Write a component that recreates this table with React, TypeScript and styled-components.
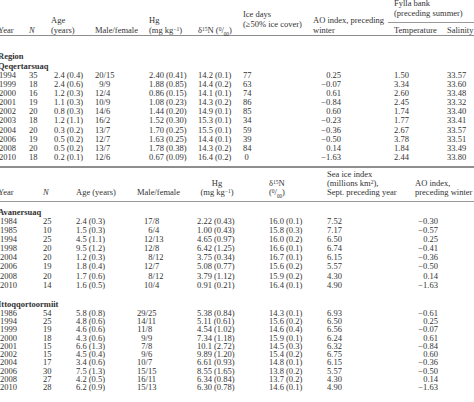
import React from "react";
import styled, { createGlobalStyle } from "styled-components";

const Global = createGlobalStyle`
  html, body { margin: 0; padding: 0; background: #ffffff; overflow: hidden; }
  body { width: 474px; height: 402px; }
`;

const TOP_COLS = "31px 22px 44px 54px 49px 45px 70px 81px 53px 40px";
const BOT_COLS = "45px 33px 61px 60px 72px 58px 86px 63px";

const Page = styled.div`
  width: 476px;
  margin-left: -2px;
  font-family: "Liberation Serif", "Times New Roman", serif;
  font-size: 8.5px;
  color: #333333;
  white-space: nowrap;
`;

const TopHead = styled.div`
  display: grid;
  grid-template-columns: ${TOP_COLS};
  grid-template-rows: auto auto;
  margin-top: -2px;
  line-height: 10px;
  border-bottom: 1.5px solid #8e8e8e;
`;

const HCell = styled.div<{ $col: number; $pb?: number; $center?: boolean }>`
  grid-column: ${(p) => p.$col};
  grid-row: 1 / span 2;
  align-self: end;
  padding-bottom: ${(p) => p.$pb ?? 0}px;
  text-align: ${(p) => (p.$center ? "center" : "left")};
`;

const Group = styled.div`
  grid-column: 9 / span 2;
  grid-row: 1;
  margin-left: -6px;
  padding-left: 6px;
  padding-bottom: 3.5px;
  border-bottom: 1px solid #9a9a9a;
`;

const SubHead = styled.div<{ $col: number }>`
  grid-column: ${(p) => p.$col};
  grid-row: 2;
  padding-top: 2.5px;
`;

const Line = styled.div``;

const Region = styled.div<{ $mt?: number; $lh?: number }>`
  font-weight: bold;
  line-height: ${(p) => p.$lh ?? 9}px;
  margin-top: ${(p) => p.$mt ?? 0}px;
`;

const Row = styled.div<{ $cols: string; $lh: number }>`
  display: grid;
  grid-template-columns: ${(p) => p.$cols};
  line-height: ${(p) => p.$lh}px;
`;

const Cell = styled.div<{ $pl?: number; $pr?: number; $align?: string }>`
  padding-left: ${(p) => p.$pl ?? 0}px;
  padding-right: ${(p) => p.$pr ?? 0}px;
  text-align: ${(p) => p.$align ?? "left"};
`;

const Num = styled.span<{ $w: number }>`
  display: inline-block;
  width: ${(p) => p.$w}px;
  text-align: right;
`;

const IceBox = styled.span`
  display: inline-block;
  width: 7px;
  text-align: center;
`;

const Rule = styled.div<{ $w: number; $mt: number }>`
  height: ${(p) => p.$w}px;
  background: #8e8e8e;
  margin-top: ${(p) => p.$mt}px;
`;

const BotHead = styled.div`
  display: grid;
  grid-template-columns: ${BOT_COLS};
  line-height: 9px;
  padding-top: 1.5px;
  padding-bottom: 4px;
  border-bottom: 1px solid #9a9a9a;
`;

const BCell = styled.div<{ $center?: boolean; $w?: number; $pl?: number }>`
  align-self: end;
  text-align: ${(p) => (p.$center ? "center" : "left")};
  width: ${(p) => (p.$w ? `${p.$w}px` : "auto")};
  padding-left: ${(p) => p.$pl ?? 0}px;
`;

const Sup = styled.sup`
  font-size: 0.65em;
  line-height: 0;
  vertical-align: 0.45em;
`;

const Block = styled.div<{ $pt: number }>`
  padding-top: ${(p) => p.$pt}px;
`;

type TopRow = [string, string, string, string, string, string, string, string, string, string];

const topRows: TopRow[] = [
  ["1994", "35", "2.4 (0.4)", "20/15", "2.40 (0.41)", "14.2 (0.1)", "77", "0.25", "1.50", "33.57"],
  ["1999", "18", "2.4 (0.6)", "9/9", "1.88 (0.85)", "14.4 (0.2)", "63", "\u22120.07", "3.34", "33.60"],
  ["2000", "16", "1.2 (0.3)", "12/4", "0.86 (0.15)", "14.1 (0.1)", "74", "0.61", "2.60", "33.48"],
  ["2001", "19", "1.1 (0.3)", "10/9", "1.08 (0.23)", "14.3 (0.2)", "86", "\u22120.84", "2.45", "33.32"],
  ["2002", "20", "0.8 (0.3)", "14/6", "1.44 (0.20)", "14.9 (0.1)", "85", "0.60", "1.74", "33.40"],
  ["2003", "18", "1.2 (1.1)", "16/2", "1.52 (0.30)", "15.3 (0.1)", "34", "\u22120.23", "1.77", "33.41"],
  ["2004", "20", "0.3 (0.2)", "13/7", "1.70 (0.25)", "15.5 (0.1)", "59", "\u22120.36", "2.67", "33.57"],
  ["2006", "19", "0.5 (0.2)", "12/7", "1.63 (0.25)", "14.4 (0.1)", "39", "\u22120.50", "3.78", "33.51"],
  ["2008", "20", "0.5 (0.2)", "13/7", "1.78 (0.38)", "14.3 (0.2)", "84", "0.14", "1.84", "33.49"],
  ["2010", "18", "0.2 (0.1)", "12/6", "0.67 (0.09)", "16.4 (0.2)", "0", "\u22121.63", "2.44", "33.80"],
];

type BotRow = [string, string, string, string, string, string, string, string];

const avanersuaq: BotRow[] = [
  ["1984", "25", "2.4 (0.3)", "17/8", "2.22 (0.43)", "16.0 (0.1)", "7.52", "\u22120.30"],
  ["1985", "10", "1.5 (0.3)", "6/4", "1.00 (0.43)", "15.8 (0.3)", "7.17", "\u22120.57"],
  ["1994", "25", "4.5 (1.1)", "12/13", "4.65 (0.97)", "16.0 (0.2)", "6.50", "0.25"],
  ["1998", "20", "9.5 (1.2)", "12/8", "6.42 (1.25)", "16.6 (0.1)", "6.74", "\u22120.41"],
  ["2004", "20", "1.2 (0.3)", "8/12", "3.75 (0.34)", "16.7 (0.1)", "6.15", "\u22120.36"],
  ["2006", "19", "1.8 (0.4)", "12/7", "5.08 (0.77)", "15.6 (0.2)", "5.57", "\u22120.50"],
  ["2008", "20", "1.7 (0.6)", "8/12", "3.79 (1.12)", "15.9 (0.2)", "4.30", "0.14"],
  ["2010", "14", "1.6 (0.5)", "10/4", "0.91 (0.21)", "16.4 (0.1)", "4.90", "\u22121.63"],
];

const ittoqq: BotRow[] = [
  ["1986", "54", "5.8 (0.8)", "29/25", "5.38 (0.84)", "14.3 (0.1)", "6.93", "\u22120.61"],
  ["1994", "25", "4.8 (0.6)", "14/11", "5.11 (0.61)", "15.6 (0.2)", "6.50", "0.25"],
  ["1999", "19", "4.6 (0.6)", "11/8", "4.54 (1.02)", "14.6 (0.4)", "6.56", "\u22120.07"],
  ["2000", "18", "4.3 (0.6)", "9/9", "7.34 (1.18)", "15.9 (0.1)", "6.24", "0.61"],
  ["2001", "15", "6.6 (1.3)", "7/8", "10.1 (2.72)", "14.5 (0.3)", "6.32", "\u22120.84"],
  ["2002", "15", "4.5 (0.4)", "9/6", "9.89 (1.20)", "15.4 (0.2)", "6.75", "0.60"],
  ["2004", "17", "3.4 (0.6)", "10/7", "6.61 (0.93)", "14.8 (0.1)", "6.15", "\u22120.36"],
  ["2006", "30", "7.5 (1.3)", "15/15", "8.55 (1.65)", "13.8 (0.2)", "5.57", "\u22120.50"],
  ["2008", "27", "4.2 (0.5)", "16/11", "6.34 (0.84)", "13.7 (0.2)", "4.30", "0.14"],
  ["2010", "28", "6.2 (0.9)", "15/13", "6.30 (0.78)", "14.6 (0.1)", "4.90", "\u22121.63"],
];

const Ratio: React.FC<{ v: string; w: number }> = ({ v, w }) => {
  const [a, b] = v.split("/");
  return (
    <>
      <Num $w={w}>{a}</Num>/{b}
    </>
  );
};

const Delta = () => (
  <>
    δ<Sup>15</Sup>N
  </>
);

const Permil = () => (
  <>
    (<Sup>0</Sup>/<sub style={{ fontSize: "0.6em", lineHeight: 0 }}>00</sub>)
  </>
);

interface SectionProps {
  name: string;
  rows: BotRow[];
  lh: number;
  mt: number;
  mfIndent: number;
  seaShift: number;
}

const Section: React.FC<SectionProps> = ({ name, rows, lh, mt, mfIndent, seaShift }) => (
  <>
    <Region $mt={mt}>{name}</Region>
    {rows.map((r, i) => (
      <Row key={i} $cols={BOT_COLS} $lh={lh}>
        <Cell $pl={2}>{r[0]}</Cell>
        <Cell>{r[1]}</Cell>
        <Cell>{r[2]}</Cell>
        <Cell $pl={mfIndent}>
          <Ratio v={r[3]} w={8.5} />
        </Cell>
        <Cell>{r[4]}</Cell>
        <Cell>{r[5]}</Cell>
        <Cell $pl={seaShift}>{r[6]}</Cell>
        <Cell $align="right" $pr={38}>
          {r[7]}
        </Cell>
      </Row>
    ))}
  </>
);

export default function App() {
  return (
    <>
      <Global />
      <Page>
        <TopHead>
          <HCell $col={1}>Year</HCell>
          <HCell $col={2}>
            <i>N</i>
          </HCell>
          <HCell $col={3}>
            <Line>Age</Line>
            <Line>(years)</Line>
          </HCell>
          <HCell $col={4}>Male/female</HCell>
          <HCell $col={5}>
            <Line>Hg</Line>
            <Line>
              (mg kg<Sup>−1</Sup>)
            </Line>
          </HCell>
          <HCell $col={6}>
            <Delta /> <Permil />
          </HCell>
          <HCell $col={7} $pb={6}>
            <Line>Ice days</Line>
            <Line>(≥50% ice cover)</Line>
          </HCell>
          <HCell $col={8}>
            <Line>AO index, preceding</Line>
            <Line>winter</Line>
          </HCell>
          <Group>
            <Line>Fylla bank</Line>
            <Line>(preceding summer)</Line>
          </Group>
          <SubHead $col={9}>Temperature</SubHead>
          <SubHead $col={10}>Salinity</SubHead>
        </TopHead>

        <Block $pt={16}>
          <Region $lh={9.5}>Region</Region>
          <Region $lh={9.5}>Qeqertarsuaq</Region>
          {topRows.map((r, i) => (
            <Row key={i} $cols={TOP_COLS} $lh={9.1}>
              <Cell $pl={1}>{r[0]}</Cell>
              <Cell>{r[1]}</Cell>
              <Cell $pl={3}>{r[2]}</Cell>
              <Cell>
                <Ratio v={r[3]} w={8.5} />
              </Cell>
              <Cell>{r[4]}</Cell>
              <Cell>{r[5]}</Cell>
              <Cell>
                <IceBox>{r[6]}</IceBox>
              </Cell>
              <Cell $align="right" $pr={53}>
                {r[7]}
              </Cell>
              <Cell>{r[8]}</Cell>
              <Cell>{r[9]}</Cell>
            </Row>
          ))}
        </Block>

        <Rule $w={2} $mt={4.5} />

        <BotHead>
          <BCell>Year</BCell>
          <BCell>
            <i>N</i>
          </BCell>
          <BCell>Age (years)</BCell>
          <BCell>Male/female</BCell>
          <BCell $center $w={40}>
            <Line>Hg</Line>
            <Line>
              (mg kg<Sup>−1</Sup>)
            </Line>
          </BCell>
          <BCell>
            <Line>
              <Delta />
            </Line>
            <Line>
              <Permil />
            </Line>
          </BCell>
          <BCell>
            <Line>Sea ice index</Line>
            <Line>
              (millions km<Sup>2</Sup>),
            </Line>
            <Line>Sept. preceding year</Line>
          </BCell>
          <BCell $pl={2}>
            <Line>AO index,</Line>
            <Line>preceding winter</Line>
          </BCell>
        </BotHead>

        <Section name="Avanersuaq" rows={avanersuaq} lh={9.1} mt={6} mfIndent={7} seaShift={0} />
        <Section name="Ittoqqortoormiit" rows={ittoqq} lh={8.25} mt={10.2} mfIndent={0} seaShift={-6} />
      </Page>
    </>
  );
}
